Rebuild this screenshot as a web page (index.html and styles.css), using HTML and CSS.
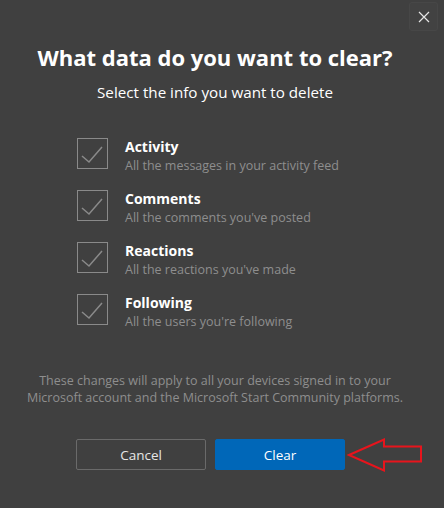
FILE: index.html
```html
<!DOCTYPE html>
<html lang="en">
<head>
<meta charset="utf-8">
<title>Clear data</title>
<link rel="stylesheet" href="styles.css">
</head>
<body>
<div class="dialog">
  <button class="close" aria-label="Close">
    <svg width="12" height="12" viewBox="0 0 12 12"><path d="M1 1L11 11M11 1L1 11" stroke="#e6e6e6" stroke-width="1.2" fill="none"/></svg>
  </button>
  <h1 class="title">What data do you want to clear?</h1>
  <p class="subtitle">Select the info you want to delete</p>
  <ul class="options">
    <li class="option">
      <span class="box"><svg width="31" height="31" viewBox="0 0 31 31"><path d="M5 18L12 24L25 9" stroke="#8a8a8a" stroke-width="1.5" fill="none"/></svg></span>
      <div class="text"><div class="label">Activity</div><div class="desc">All the messages in your activity feed</div></div>
    </li>
    <li class="option">
      <span class="box"><svg width="31" height="31" viewBox="0 0 31 31"><path d="M5 18L12 24L25 9" stroke="#8a8a8a" stroke-width="1.5" fill="none"/></svg></span>
      <div class="text"><div class="label">Comments</div><div class="desc">All the comments you've posted</div></div>
    </li>
    <li class="option">
      <span class="box"><svg width="31" height="31" viewBox="0 0 31 31"><path d="M5 18L12 24L25 9" stroke="#8a8a8a" stroke-width="1.5" fill="none"/></svg></span>
      <div class="text"><div class="label">Reactions</div><div class="desc">All the reactions you've made</div></div>
    </li>
    <li class="option">
      <span class="box"><svg width="31" height="31" viewBox="0 0 31 31"><path d="M5 18L12 24L25 9" stroke="#8a8a8a" stroke-width="1.5" fill="none"/></svg></span>
      <div class="text"><div class="label">Following</div><div class="desc">All the users you're following</div></div>
    </li>
  </ul>
  <p class="note">These changes will apply to all your devices signed in to your Microsoft account and the Microsoft Start Community platforms.</p>
  <div class="actions">
    <button class="btn cancel">Cancel</button>
    <button class="btn clear">Clear</button>
    <svg class="arrow" width="76" height="34" viewBox="0 0 76 34"><path d="M2 17L37 1.5V8.5H74V23.5H37V32.5Z" stroke="#e8141c" stroke-width="2" fill="none" stroke-linejoin="miter"/></svg>
  </div>
</div>
</body>
</html>
```
FILE: styles.css
```css
html, body {
  margin: 0;
  padding: 0;
}
body {
  background: #404040;
  width: 444px;
  height: 508px;
  overflow: hidden;
  font-family: "Open Sans", "Noto Sans", sans-serif;
  color: #ffffff;
}
.dialog {
  position: relative;
  display: flex;
  flex-direction: column;
  align-items: center;
  padding-top: 41px;
  padding-right: 14px;
  height: 508px;
  box-sizing: border-box;
}
.close {
  position: absolute;
  top: 2px;
  right: 6px;
  width: 29px;
  height: 29px;
  border: 1px solid #474747;
  border-radius: 3px;
  background: #424242;
  display: flex;
  align-items: center;
  justify-content: center;
  padding: 0;
}
.title {
  margin: 0;
  font-size: 22px;
  line-height: 32px;
  font-weight: 700;
}
.subtitle {
  margin: 8px 0 0;
  font-size: 15.2px;
  line-height: 22px;
}
.options {
  list-style: none;
  margin: 35px 0 0;
  padding: 0 0 0 77px;
  align-self: stretch;
  display: flex;
  flex-direction: column;
  gap: 16px;
}
.option {
  display: flex;
  gap: 17px;
  align-items: flex-start;
}
.box {
  width: 31px;
  height: 31px;
  border: 1px solid #8a8a8a;
  box-sizing: border-box;
  display: block;
  flex: none;
  position: relative;
}
.box svg {
  position: absolute;
  left: -1px;
  top: -1px;
}
.text {
  margin-top: -1px;
}
.label {
  font-size: 14px;
  font-weight: 700;
  line-height: 20px;
}
.desc {
  font-size: 12.5px;
  line-height: 17px;
  color: #8e8e8e;
}
.note {
  margin: 42px 0 0;
  width: 380px;
  text-align: center;
  font-size: 12.5px;
  line-height: 17px;
  color: #8e8e8e;
}
.actions {
  position: relative;
  margin-top: 33px;
  display: flex;
  gap: 9px;
  align-self: stretch;
  padding-left: 76px;
}
.btn {
  width: 130px;
  height: 31px;
  font-family: inherit;
  font-size: 13.5px;
  border-radius: 2px;
  padding: 0;
}
.cancel {
  background: transparent;
  border: 1px solid #6a6a6a;
  color: #e6e6e6;
}
.clear {
  background: #0067b8;
  border: 1px solid #0067b8;
  color: #ffffff;
}
.arrow {
  position: absolute;
  left: 347px;
  top: -1px;
}
```
